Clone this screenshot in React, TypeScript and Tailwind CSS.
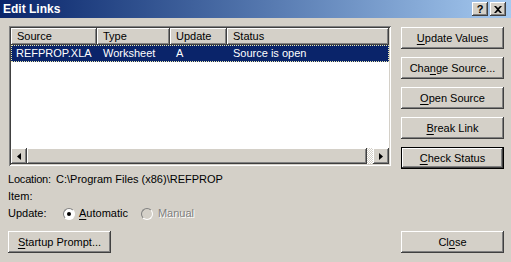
const raised =
  'shadow-[inset_-1px_-1px_#404040,inset_1px_1px_#ffffff,inset_-2px_-2px_#808080,inset_2px_2px_#d4d0c8]';
const sunken =
  'shadow-[inset_1px_1px_#808080,inset_-1px_-1px_#ffffff,inset_2px_2px_#404040,inset_-2px_-2px_#d4d0c8]';

function Btn({ pre, acc, post, def, className = '' }: { pre: string; acc: string; post: string; def?: boolean; className?: string }) {
  return (
    <div
      className={`h-[22px] w-[103px] bg-[#d4d0c8] flex items-center justify-center text-black ${
        def ? 'border border-black shadow-[inset_-1px_-1px_#404040,inset_1px_1px_#ffffff,inset_-2px_-2px_#808080]' : raised
      } ${className}`}
    >
      <span>
        {pre}
        <span className="underline underline-offset-2">{acc}</span>
        {post}
      </span>
    </div>
  );
}

function HeaderCell({ label, w }: { label: string; w: string }) {
  return (
    <div className={`${w} h-[17px] flex items-center pl-[6px] ${raised} shrink-0`}>{label}</div>
  );
}

export default function App() {
  return (
    <div className="w-[511px] h-[262px] bg-[#d4d0c8] text-[11px] leading-none text-black font-['Liberation_Sans',Arial,sans-serif] overflow-hidden">
      {/* Title bar */}
      <div className="h-[18px] flex items-center justify-between bg-gradient-to-r from-[#0a246a] to-[#a6caf0] pl-[3px] pr-[5px]">
        <span className="text-white font-bold text-[12px]">Edit Links</span>
        <div className="flex gap-[2px]">
          <div className={`w-[16px] h-[14px] bg-[#d4d0c8] ${raised} flex items-center justify-center font-bold text-[11px]`}>?</div>
          <div className={`w-[16px] h-[14px] bg-[#d4d0c8] ${raised} flex items-center justify-center`}>
            <svg width="8" height="7" viewBox="0 0 8 7">
              <path d="M0 0h2l2 2 2-2h2L5 3.5 8 7H6L4 5 2 7H0l3-3.5z" fill="#000" />
            </svg>
          </div>
        </div>
      </div>

      <div className="flex pl-[9px] pt-[8px]">
        {/* Left column */}
        <div className="w-[382px] flex flex-col">
          <div className={`h-[140px] bg-white ${sunken} p-[2px] flex flex-col`}>
            <div className="flex bg-[#d4d0c8]">
              <HeaderCell label="Source" w="w-[86px]" />
              <HeaderCell label="Type" w="w-[73px]" />
              <HeaderCell label="Update" w="w-[57px]" />
              <HeaderCell label="Status" w="w-[162px]" />
            </div>
            <div className="h-[17px] bg-[#0a246a] text-white flex items-center border border-dotted border-[#e8e8b0]">
              <span className="w-[85px] pl-[4px]">REFPROP.XLA</span>
              <span className="w-[73px] pl-[6px]">Worksheet</span>
              <span className="w-[57px] pl-[6px]">A</span>
              <span className="pl-[6px]">Source is open</span>
            </div>
            <div className="flex-1" />
            {/* Horizontal scrollbar */}
            <div className="h-[16px] flex bg-[#e8e6e0]">
              <div className={`w-[16px] h-[16px] bg-[#d4d0c8] ${raised} flex items-center justify-center`}>
                <svg width="4" height="7" viewBox="0 0 4 7"><path d="M4 0v7L0 3.5z" fill="#000" /></svg>
              </div>
              <div className={`w-[340px] h-[16px] bg-[#d4d0c8] ${raised}`} />
              <div className="flex-1 bg-[repeating-conic-gradient(#ffffff_0_25%,#d4d0c8_0_50%)] bg-[length:2px_2px]" />
              <div className={`w-[16px] h-[16px] bg-[#d4d0c8] ${raised} flex items-center justify-center`}>
                <svg width="4" height="7" viewBox="0 0 4 7"><path d="M0 0v7l4-3.5z" fill="#000" /></svg>
              </div>
            </div>
          </div>

          <div className="flex flex-col gap-[4px] pt-[7px] -ml-[1px]">
            <div className="flex h-[13px] items-center">
              <span className="w-[48px] tracking-[-0.2px]">Location:</span>
              <span>C:\Program Files (x86)\REFPROP</span>
            </div>
            <div className="flex h-[13px] items-center">
              <span className="w-[48px]">Item:</span>
            </div>
            <div className="flex h-[13px] items-center">
              <span className="w-[48px]">Update:</span>
              <span className="w-[12px] h-[12px] rounded-full bg-white border border-[#808080] border-r-white border-b-white flex items-center justify-center ml-[7px]">
                <span className="w-[4px] h-[4px] rounded-full bg-black" />
              </span>
              <span className="ml-[4px]">
                <span className="underline underline-offset-2">A</span>utomatic
              </span>
              <span className="w-[12px] h-[12px] rounded-full bg-[#d4d0c8] border border-[#808080] border-r-white border-b-white ml-[13px]" />
              <span className="ml-[5px] text-[#808080] [text-shadow:1px_1px_#ffffff]">Manual</span>
            </div>
          </div>
        </div>

        {/* Right buttons */}
        <div className="ml-[10px] flex flex-col gap-[8px] pt-[1px]">
          <Btn pre="" acc="U" post="pdate Values" />
          <Btn pre="Cha" acc="n" post="ge Source..." />
          <Btn pre="" acc="O" post="pen Source" />
          <Btn pre="" acc="B" post="reak Link" />
          <Btn pre="" acc="C" post="heck Status" def />
        </div>
      </div>

      <div className="flex justify-between pl-[8px] pr-[7px] mt-[11px]">
        <Btn pre="" acc="S" post="tartup Prompt..." />
        <Btn pre="Cl" acc="o" post="se" />
      </div>
    </div>
  );
}
